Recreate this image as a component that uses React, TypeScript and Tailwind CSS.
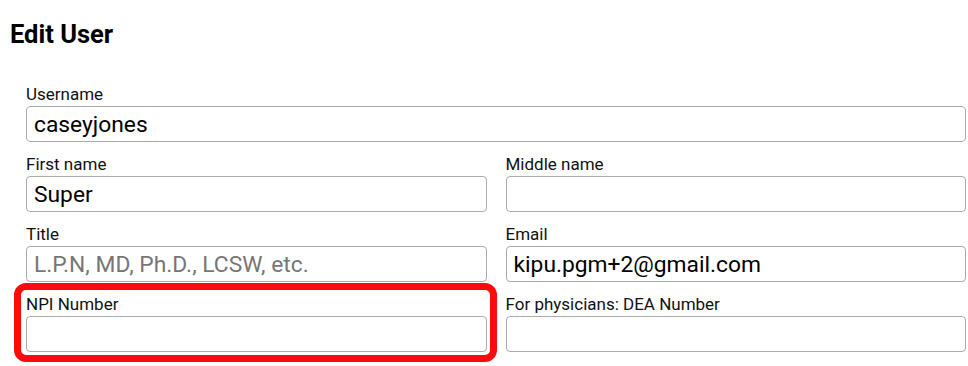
import type { ReactNode } from 'react'

const inputCls =
  'block w-full h-[36px] rounded-[4px] border border-[#ababab] bg-white px-[7px] text-[22.8px] text-black placeholder:text-[#767676] focus:outline-none'

function Field({ label, children, className = '' }: { label: string; children: ReactNode; className?: string }) {
  return (
    <div className={`relative ${className}`}>
      <label className="block text-[17px] leading-[20px] text-[#111] mb-[2px]">{label}</label>
      {children}
    </div>
  )
}

export default function App() {
  return (
    <div className="min-h-screen bg-white pl-[10px] pt-[20px] font-['Roboto','Liberation_Sans',sans-serif]">
      <h1 className="text-[25.5px] leading-[28px] font-bold text-black">Edit User</h1>

      <form className="ml-4 mr-[2px] mt-[36px] flex flex-col gap-y-[12px]">
        <Field label="Username">
          <input className={inputCls} defaultValue="caseyjones" />
        </Field>

        <div className="grid grid-cols-2 gap-x-[19px] gap-y-[12px]">
          <Field label="First name">
            <input className={inputCls} defaultValue="Super" />
          </Field>
          <Field label="Middle name">
            <input className={inputCls} />
          </Field>

          <Field label="Title">
            <input className={inputCls} placeholder="L.P.N, MD, Ph.D., LCSW, etc." />
          </Field>
          <Field label="Email">
            <input className={inputCls} defaultValue="kipu.pgm+2@gmail.com" />
          </Field>

          <Field label="NPI Number">
            <input className={inputCls} />
            {/* highlight annotation */}
            <div className="pointer-events-none absolute -left-3 -right-[10px] -top-[11px] -bottom-[10px] rounded-[12px] border-[7px] border-[#ff0a0a]" />
          </Field>
          <Field label="For physicians: DEA Number">
            <input className={inputCls} />
          </Field>
        </div>
      </form>
    </div>
  )
}
